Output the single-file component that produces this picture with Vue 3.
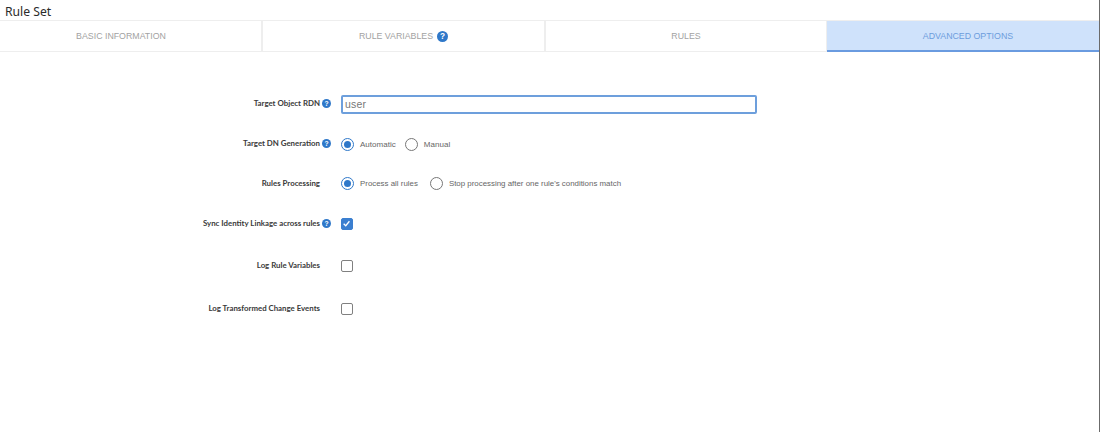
<script setup>
const tabs = [
  { label: 'BASIC INFORMATION', cls: 'w1' },
  { label: 'RULE VARIABLES', cls: 'w2', help: true },
  { label: 'RULES', cls: 'w3' },
  { label: 'ADVANCED OPTIONS', cls: 'w4', active: true },
]
const rows = [
  { label: 'Target Object RDN', help: true, type: 'input', h: 'h40' },
  { label: 'Target DN Generation', help: true, type: 'radio', h: 'h40', group: 'tight', options: [
    { text: 'Automatic', on: true }, { text: 'Manual' } ] },
  { label: 'Rules Processing', type: 'radio', h: 'h39', group: 'wide', options: [
    { text: 'Process all rules', on: true }, { text: "Stop processing after one rule's conditions match" } ] },
  { label: 'Sync Identity Linkage across rules', help: true, type: 'check', on: true, h: 'h42' },
  { label: 'Log Rule Variables', type: 'check', h: 'h42' },
  { label: 'Log Transformed Change Events', type: 'check', h: 'h43' },
]
</script>

<template>
  <div class="page">
    <h1 class="title">Rule Set</h1>
    <nav class="tabs">
      <div v-for="t in tabs" :key="t.label" class="tab" :class="[t.cls, { active: t.active }]">
        <span>{{ t.label }}</span>
        <svg v-if="t.help" class="help big" viewBox="0 0 16 16"><circle cx="8" cy="8" r="8" fill="#2f78c9"/><text x="8" y="12" text-anchor="middle" class="q">?</text></svg>
      </div>
    </nav>
    <form class="form" @submit.prevent>
      <div v-for="r in rows" :key="r.label" class="row" :class="r.h">
        <div class="label" :class="{ withHelp: r.help }">
          <span>{{ r.label }}</span>
          <svg v-if="r.help" class="help" viewBox="0 0 16 16"><circle cx="8" cy="8" r="8" fill="#2f78c9"/><text x="8" y="12" text-anchor="middle" class="q">?</text></svg>
        </div>
        <div class="control">
          <div v-if="r.type === 'input'" class="input">user</div>
          <div v-else-if="r.type === 'radio'" class="radios" :class="r.group">
            <div v-for="o in r.options" :key="o.text" class="radio">
              <span class="circle" :class="{ on: o.on }"><i v-if="o.on"></i></span>
              <span class="opt">{{ o.text }}</span>
            </div>
          </div>
          <span v-else class="box" :class="{ on: r.on }">
            <svg v-if="r.on" viewBox="0 0 12 12"><path d="M2.2 6.3 5 9l4.9-6" fill="none" stroke="#fff" stroke-width="1.7"/></svg>
          </span>
        </div>
      </div>
    </form>
  </div>
</template>

<style scoped>
.page { width: 1100px; height: 432px; box-sizing: border-box; background: #fff; overflow: hidden; border-right: 1px solid #6b6b6b; font-family: "Liberation Sans", Arial, sans-serif; }
.title { margin: 0; height: 20px; padding: 3px 0 0 5px; box-sizing: border-box; font: 400 12.2px/18px "Noto Sans", sans-serif; color: #2b2b2b; }
.tabs { display: flex; height: 32px; box-sizing: border-box; border-top: 1px solid #eeeeee; border-bottom: 1px solid #eeeeee; }
.tab { display: flex; align-items: center; justify-content: center; gap: 4px; box-sizing: border-box; font-size: 8.8px; color: #a2a2a2; border-right: 2px solid #eeeeee; }
.w1 { width: 263px; padding-right: 19px; }
.w2 { width: 283px; }
.w3 { width: 281px; border-right: 1px solid #eeeeee; }
.w4 { width: 272px; padding-left: 10px; border-right: 0; }
.tab.active { background: #cfe2fb; color: #6d9ddd; height: 31px; border-bottom: 2px solid #6a9be0; }
.form { padding-top: 32px; display: flex; flex-direction: column; }
.row { display: grid; grid-template-columns: 332px 1fr; column-gap: 9px; align-items: center; }
.h39 { height: 39px; }
.h40 { height: 40px; }
.h42 { height: 42px; }
.h43 { height: 43px; }
.label { display: flex; justify-content: flex-end; align-items: center; gap: 2px; font: 700 7.85px/12px Lato, sans-serif; color: #3a3a3a; position: relative; top: -1px; padding-right: 12px; box-sizing: border-box; width: 332px; }
.label.withHelp { padding-right: 1px; }
.help { width: 9px; height: 9px; flex: none; }
.help.big { width: 11px; height: 11px; }
.q { font: 700 12px "Liberation Sans", sans-serif; fill: #fff; }
.input { width: 416px; height: 19px; box-sizing: border-box; border: 2px solid #6d9fdc; border-radius: 2px; padding-left: 2px; font-size: 10.5px; line-height: 15px; color: #777; letter-spacing: .2px; }
.radios { display: flex; align-items: center; }
.radio { display: flex; align-items: center; gap: 6px; }
.tight .radio { margin-right: 9px; }
.wide .radio { margin-right: 12px; }
.circle { width: 13px; height: 13px; box-sizing: border-box; border: 1.5px solid #777; border-radius: 50%; display: flex; align-items: center; justify-content: center; }
.circle.on { border-color: #2f78c9; }
.circle i { width: 7px; height: 7px; border-radius: 50%; background: #2f78c9; }
.opt { font-size: 8px; color: #666; letter-spacing: .03px; }
.wide .opt { font-size: 7.9px; letter-spacing: 0; }
.box { display: block; width: 12px; height: 12px; box-sizing: border-box; border: 1.5px solid #808080; border-radius: 2px; }
.box.on { background: #3b7fd0; border-color: #3b7fd0; }
.box svg { display: block; width: 9px; height: 9px; }
</style>
